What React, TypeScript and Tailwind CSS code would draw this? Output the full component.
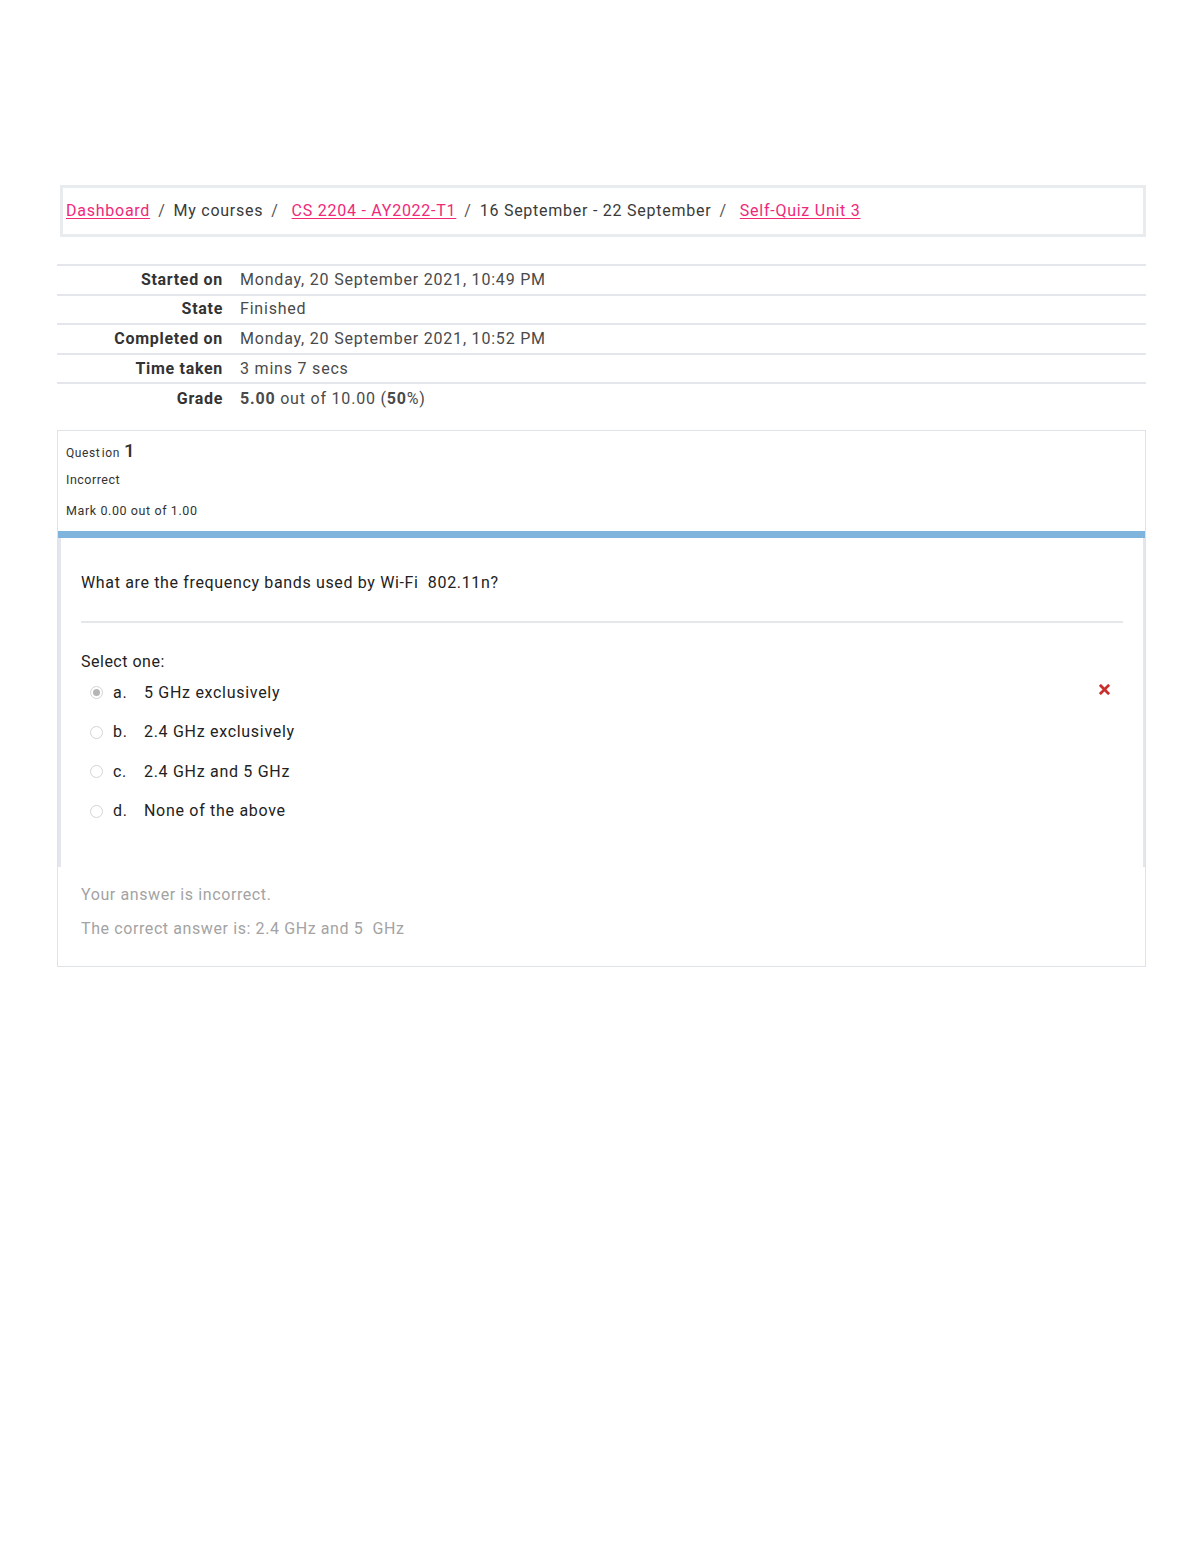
import React from "react";

const rows: { label: string; value: React.ReactNode }[] = [
  { label: "Started on", value: "Monday, 20 September 2021, 10:49 PM" },
  { label: "State", value: "Finished" },
  { label: "Completed on", value: "Monday, 20 September 2021, 10:52 PM" },
  { label: "Time taken", value: "3 mins 7 secs" },
  {
    label: "Grade",
    value: (
      <>
        <b className="font-bold">5.00</b> out of 10.00 (<b className="font-bold">50</b>%)
      </>
    ),
  },
];

const options = [
  { letter: "a.", text: "5 GHz exclusively", checked: true },
  { letter: "b.", text: "2.4 GHz exclusively", checked: false },
  { letter: "c.", text: "2.4 GHz and 5 GHz", checked: false },
  { letter: "d.", text: "None of the above", checked: false },
];

function Radio({ checked }: { checked: boolean }) {
  return (
    <span className="w-[13px] h-[13px] rounded-full border border-[#d4d4d4] bg-white flex items-center justify-center">
      {checked && <span className="w-[7px] h-[7px] rounded-full bg-[#b5b5b5]" />}
    </span>
  );
}

export default function App() {
  return (
    <div
      className="w-[1200px] min-h-[1553px] bg-white text-[#373a3c]"
      style={{ fontFamily: "Roboto, 'Liberation Sans', sans-serif" }}
    >
      <div className="pt-[185px] pl-[57px] pr-[54px]">
        {/* Breadcrumb */}
        <div className="ml-[3px] h-[52px] border-[3px] border-[#e9ecef] flex items-center pl-[3px] text-[16px] tracking-[0.75px] text-[#3a3a3a]">
          <a className="text-[#f0287a] underline underline-offset-2">Dashboard</a>
          <span className="mx-[8px] text-[#555]">/</span>
          <span>My courses</span>
          <span className="ml-[8px] mr-[13px] text-[#555]">/</span>
          <a className="text-[#f0287a] underline underline-offset-2">CS 2204 - AY2022-T1</a>
          <span className="mx-[8px] text-[#555]">/</span>
          <span>16 September - 22 September</span>
          <span className="ml-[8px] mr-[13px] text-[#555]">/</span>
          <a className="text-[#f0287a] underline underline-offset-2">Self-Quiz Unit 3</a>
        </div>

        {/* Summary table */}
        <div className="mt-[27px] border-t-2 border-[#e3e6ea]">
          {rows.map((r, i) => (
            <div
              key={r.label}
              className={`flex items-center h-[29.6px] text-[16px] ${
                i < rows.length - 1 ? "border-b-2 border-[#e3e6ea]" : ""
              }`}
            >
              <div className="w-[166px] text-right font-bold text-[#333] tracking-[0.7px]">{r.label}</div>
              <div className="pl-[17px] text-[#4a4a4a] tracking-[0.8px]">{r.value}</div>
            </div>
          ))}
        </div>

        {/* Question block */}
        <div className="mt-[16px] border border-[#dfe2e6]">
          <div className="h-[100px] pl-[8px] pt-[6px] text-[#333]">
            <div className="flex items-baseline text-[12px] tracking-[0.6px]">
              Ques<span className="tracking-[2px]">t</span>ion
              <span className="ml-[4px] text-[19px] font-medium">1</span>
            </div>
            <div className="mt-[6px] text-[12.5px] tracking-[0.5px]">Incorrect</div>
            <div className="mt-[12px] text-[12.5px] tracking-[0.6px]">Mark 0.00 out of 1.00</div>
          </div>
          <div className="h-[7px] bg-[#7fb4dc]" />
          <div className="border-l-[3px] border-r-[2px] border-[#e3e6ea] pl-[20px] pr-[20px] pt-[33px] h-[329px]">
            <div className="text-[16px] text-[#222] tracking-[0.65px]">What are the frequency bands used by Wi-Fi&nbsp; 802.11n?</div>
            <div className="mt-[26px] h-[2px] bg-[#e5e8eb]" />
            <div className="mt-[27px] text-[16px] text-[#222] tracking-[0.5px]">Select one:</div>
            <div className="-mt-[1px] pl-[9px]">
              {options.map((o) => (
                <div key={o.letter} className="flex items-center h-[39.5px] text-[16px] text-[#222] tracking-[0.7px]">
                  <Radio checked={o.checked} />
                  <span className="ml-[10px] w-[31px]">{o.letter}</span>
                  <span>{o.text}</span>
                  {o.checked && (
                    <span className="ml-auto mr-[13px] -mt-[6px] text-[#c8302f]">
                      <svg width="11" height="11" viewBox="0 0 12 12">
                        <path d="M2 2 L10 10 M10 2 L2 10" stroke="currentColor" strokeWidth="3" strokeLinecap="square" />
                      </svg>
                    </span>
                  )}
                </div>
              ))}
            </div>
          </div>
          <div className="pl-[23px] pt-[16px] pb-[25px] text-[16px] text-[#a3a3a3] tracking-[0.6px]">
            <div>Your answer is incorrect.</div>
            <div className="mt-[10px]">The correct answer is: 2.4 GHz and 5&nbsp; GHz</div>
          </div>
        </div>
      </div>
    </div>
  );
}
